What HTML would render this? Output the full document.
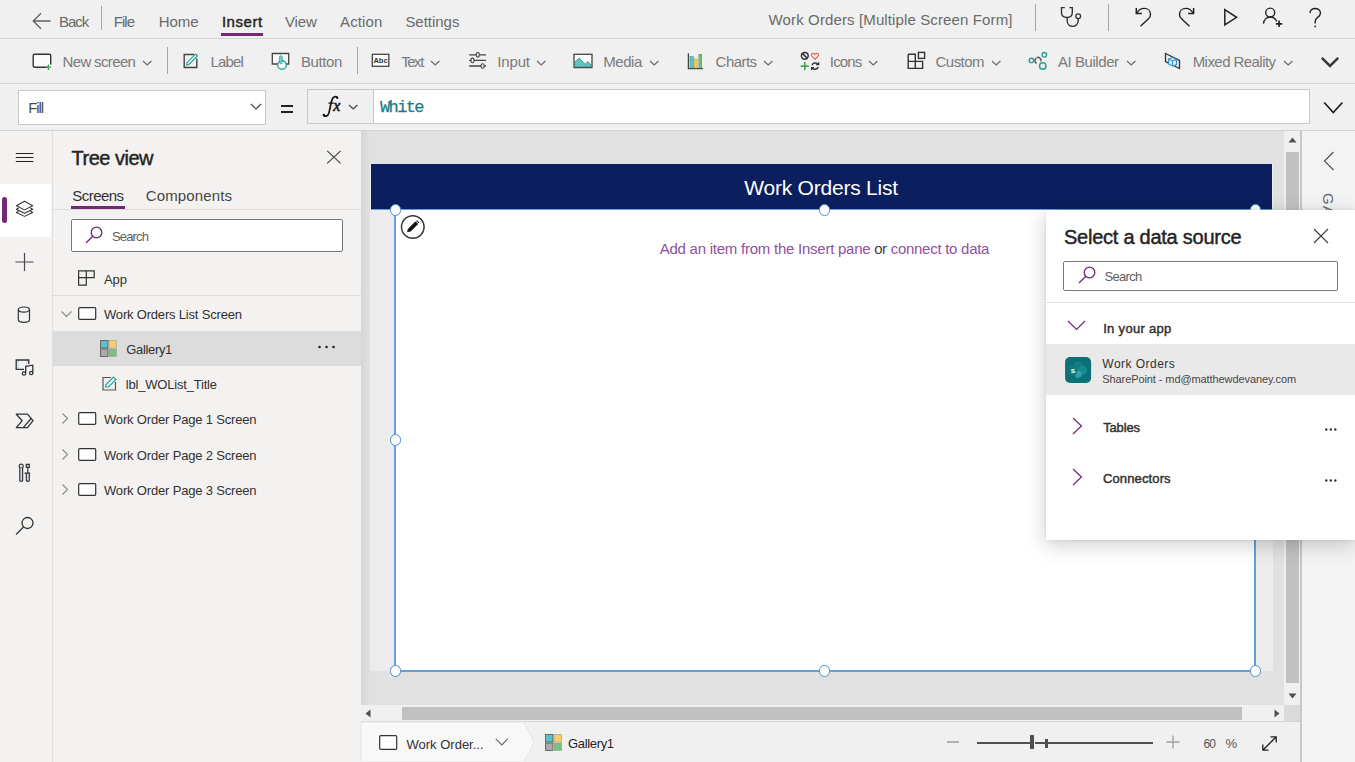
<!DOCTYPE html>
<html><head><meta charset="utf-8">
<style>
*{box-sizing:border-box;margin:0;padding:0}
html,body{width:1355px;height:762px;overflow:hidden;background:#f0f0f0;font-family:"Liberation Sans",sans-serif;color:#333;position:relative}
.a{position:absolute}
.t{position:absolute;white-space:nowrap;line-height:1}
svg{position:absolute;overflow:visible}
</style></head><body>
<div class="a" style="left:0px;top:0px;width:1355px;height:38px;background:#f0f0f0;"></div>
<div class="a" style="left:0px;top:38px;width:1355px;height:1px;background:#d4d4d4;"></div>
<div class="a" style="left:0px;top:39px;width:1355px;height:44px;background:#f0f0f0;"></div>
<div class="a" style="left:0px;top:83px;width:1355px;height:1px;background:#d4d4d4;"></div>
<div class="a" style="left:0px;top:84px;width:1355px;height:46px;background:#f0f0f0;"></div>
<div class="a" style="left:0px;top:130px;width:1355px;height:1px;background:#d4d4d4;"></div>
<div class="a" style="left:0px;top:131px;width:52px;height:631px;background:#f3f2f1;"></div>
<div class="a" style="left:52px;top:131px;width:1px;height:631px;background:#e1dfdd;"></div>
<div class="a" style="left:0px;top:184px;width:51px;height:53px;background:#ffffff;"></div>
<div class="a" style="left:2px;top:197px;width:5px;height:26px;background:#742774;border-radius:3px"></div>
<div class="a" style="left:53px;top:131px;width:308px;height:631px;background:#f3f2f1;"></div>
<div class="a" style="left:361px;top:131px;width:939px;height:574px;background:#e1e1e1;"></div>
<div class="a" style="left:361px;top:131px;width:9px;height:574px;background:linear-gradient(90deg,#d5d5d5,#e1e1e1);"></div>
<svg style="left:32px;top:12px;" width="19" height="18" viewBox="0 0 19 18"><path d="M1.2 9 H18.5 M9 1.2 L1.2 9 L9 16.8" fill="none" stroke="#5f5f5f" stroke-width="1.3"/></svg>
<div class="t" style="left:59.00px;top:14px;font-size:15px;font-family:'Liberation Sans',sans-serif;font-weight:normal;color:#6a6a6a;letter-spacing:-1.033px;">Back</div>
<div class="a" style="left:101px;top:6px;width:1px;height:24px;background:#a6a6a6;"></div>
<div class="t" style="left:113.70px;top:14px;font-size:15px;font-family:'Liberation Sans',sans-serif;font-weight:normal;color:#6a6a6a;letter-spacing:-0.942px;">File</div>
<div class="t" style="left:158.70px;top:14px;font-size:15px;font-family:'Liberation Sans',sans-serif;font-weight:normal;color:#6a6a6a;letter-spacing:-0.033px;">Home</div>
<div class="t" style="left:221.90px;top:14px;font-size:15px;font-family:'Liberation Sans',sans-serif;font-weight:normal;color:#252423;letter-spacing:0.560px;-webkit-text-stroke:0.45px #252423;">Insert</div>
<div class="a" style="left:221px;top:33px;width:42px;height:3px;background:#742774;"></div>
<div class="t" style="left:284.90px;top:14px;font-size:15px;font-family:'Liberation Sans',sans-serif;font-weight:normal;color:#6a6a6a;letter-spacing:-0.083px;">View</div>
<div class="t" style="left:340.00px;top:14px;font-size:15px;font-family:'Liberation Sans',sans-serif;font-weight:normal;color:#6a6a6a;letter-spacing:0.130px;">Action</div>
<div class="t" style="left:405.40px;top:14px;font-size:15px;font-family:'Liberation Sans',sans-serif;font-weight:normal;color:#6a6a6a;letter-spacing:-0.021px;">Settings</div>
<div class="t" style="left:768.60px;top:12px;font-size:15px;font-family:'Liberation Sans',sans-serif;font-weight:normal;color:#6a6a6a;letter-spacing:0.123px;">Work Orders [Multiple Screen Form]</div>
<div class="a" style="left:1035px;top:4px;width:1px;height:27px;background:#a6a6a6;"></div>
<div class="a" style="left:1108px;top:4px;width:1px;height:27px;background:#a6a6a6;"></div>
<svg style="left:1060px;top:7px;" width="23" height="21" viewBox="0 0 23 21"><path d="M4.8 0.6 H1.5 V5.5 C1.5 9 4 10.5 7 10.5 C10 10.5 12.3 9 12.3 5.5 V0.6 H9.4" fill="none" stroke="#333" stroke-width="1.4"/><path d="M7.2 10.5 V13.5 C7.2 17 9.5 19.4 12.7 19.4 C15.7 19.4 18.2 17 18.2 13.5 V11.8" fill="none" stroke="#333" stroke-width="1.4"/><circle cx="18.2" cy="9.2" r="2.4" fill="none" stroke="#333" stroke-width="1.3"/></svg>
<svg style="left:1135px;top:7px;" width="18" height="21" viewBox="0 0 18 21"><path d="M1.3 1.1 V6.6 H6.9" fill="none" stroke="#222" stroke-width="1.5"/><path d="M1.8 6.2 C3.5 3 6 1.4 9.4 1.4 C13 1.4 15.5 4 15.5 7.5 C15.5 9 15 10.5 13.7 11.5 L5.5 19.3" fill="none" stroke="#222" stroke-width="1.4"/></svg>
<svg style="left:1177px;top:7px;" width="18" height="21" viewBox="0 0 18 21"><path d="M16.6 1.1 V6.6 H11.1" fill="none" stroke="#222" stroke-width="1.5"/><path d="M16.1 6.2 C14.4 3 11.9 1.4 8.9 1.4 C5 1.4 2.5 4 2.5 7.5 C2.5 9 3 10.5 4.3 11.5 L12.5 19.3" fill="none" stroke="#222" stroke-width="1.4"/></svg>
<svg style="left:1223px;top:8px;" width="16" height="18" viewBox="0 0 16 18"><path d="M1.8 1.6 L13.6 9.3 L1.8 16.9 Z" fill="none" stroke="#222" stroke-width="1.5" stroke-linejoin="miter"/></svg>
<svg style="left:1262px;top:7px;" width="21" height="21" viewBox="0 0 21 21"><circle cx="8.2" cy="5.6" r="4.5" fill="none" stroke="#222" stroke-width="1.4"/><path d="M1.4 16.6 C2 12.5 5 10 8.2 10 C11 10 13.5 11.8 14.8 14.5" fill="none" stroke="#222" stroke-width="1.4"/><path d="M17.1 13.6 V20 M13.9 16.9 H20.3" stroke="#222" stroke-width="1.6"/></svg>
<svg style="left:1308px;top:7px;" width="14" height="22" viewBox="0 0 14 22"><path d="M2 6 C2 3 4.5 1.5 7.2 1.5 C10 1.5 12.5 3.5 12.5 6 C12.5 8.5 10.5 9.8 9 11 C7.8 12 7.2 13 7.2 14.5 V16.5" fill="none" stroke="#222" stroke-width="1.4"/><circle cx="7.2" cy="19.4" r="0.9" fill="#222"/></svg>
<svg style="left:32px;top:53px;" width="21" height="17" viewBox="0 0 21 17"><path d="M16.5 14.2 H2.6 C1.8 14.2 1.2 13.6 1.2 12.8 V2.7 C1.2 1.9 1.8 1.3 2.6 1.3 H17.3 C18.1 1.3 18.7 1.9 18.7 2.7 V11.5" fill="#fafafa" stroke="#333" stroke-width="1.4"/><path d="M16.4 11.5 V16.9 M13.7 14.2 H19.1" stroke="#4a9e55" stroke-width="1.3"/></svg>
<div class="t" style="left:62.50px;top:54px;font-size:15px;font-family:'Liberation Sans',sans-serif;font-weight:normal;color:#7a7a7a;letter-spacing:-0.639px;">New screen</div>
<svg style="left:142px;top:60px;" width="11" height="7" viewBox="0 0 11 7"><path d="M1 1 L5.2 5 L9.4 1" fill="none" stroke="#666" stroke-width="1.1"/></svg>
<div class="a" style="left:167px;top:47px;width:1px;height:27px;background:#a6a6a6;"></div>
<svg style="left:183px;top:53px;" width="16" height="16" viewBox="0 0 16 16"><path d="M11 1.5 H1.2 V14.5 H13.8 V5.5" fill="none" stroke="#444" stroke-width="1.4"/><path d="M3.6 11.9 L4.1 9.7 L12.6 1.2 L14.4 3 L5.9 11.5 Z" fill="#e6f7f5" stroke="#2aa198" stroke-width="1.2"/></svg>
<div class="t" style="left:210.40px;top:54px;font-size:15px;font-family:'Liberation Sans',sans-serif;font-weight:normal;color:#7a7a7a;letter-spacing:-0.788px;">Label</div>
<svg style="left:271px;top:52px;" width="19" height="19" viewBox="0 0 19 19"><path d="M7 12 H1.3 V1.5 H17.7 V12 H15" fill="#fafafa" stroke="#444" stroke-width="1.3"/><circle cx="11" cy="13" r="4.3" fill="#fff" stroke="#2aa198" stroke-width="1.4"/><rect x="8.6" y="3.8" width="2.6" height="8" rx="1.2" fill="#7fcfc8" stroke="#2aa198" stroke-width="0.8"/></svg>
<div class="t" style="left:301.00px;top:54px;font-size:15px;font-family:'Liberation Sans',sans-serif;font-weight:normal;color:#7a7a7a;letter-spacing:-0.395px;">Button</div>
<div class="a" style="left:357px;top:47px;width:1px;height:27px;background:#a6a6a6;"></div>
<svg style="left:371px;top:53px;" width="19" height="15" viewBox="0 0 19 15"><rect x="1.3" y="1.3" width="16.5" height="12" fill="#fff" stroke="#444" stroke-width="1.3"/><text x="9.5" y="10.2" font-family="Liberation Sans" font-size="7.5" font-weight="bold" text-anchor="middle" fill="#333">Abc</text></svg>
<div class="t" style="left:401.20px;top:54px;font-size:15px;font-family:'Liberation Sans',sans-serif;font-weight:normal;color:#7a7a7a;letter-spacing:-1.467px;">Text</div>
<svg style="left:430px;top:60px;" width="11" height="7" viewBox="0 0 11 7"><path d="M1 1 L5.2 5 L9.4 1" fill="none" stroke="#666" stroke-width="1.1"/></svg>
<svg style="left:468px;top:51px;" width="19" height="19" viewBox="0 0 19 19"><path d="M1.2 3.8 H18 M1.2 9.4 H18 M1.2 15 H18" stroke="#444" stroke-width="1.3"/><rect x="8.3" y="1.5" width="3" height="4.6" rx="1.5" fill="#f0f0f0" stroke="#444" stroke-width="1.1"/><rect x="3" y="7.1" width="3" height="4.6" rx="1.5" fill="#f0f0f0" stroke="#444" stroke-width="1.1"/><rect x="13.1" y="12.7" width="3" height="4.6" rx="1.5" fill="#f0f0f0" stroke="#444" stroke-width="1.1"/></svg>
<div class="t" style="left:497.30px;top:54px;font-size:15px;font-family:'Liberation Sans',sans-serif;font-weight:normal;color:#7a7a7a;letter-spacing:-0.169px;">Input</div>
<svg style="left:536px;top:60px;" width="11" height="7" viewBox="0 0 11 7"><path d="M1 1 L5.2 5 L9.4 1" fill="none" stroke="#666" stroke-width="1.1"/></svg>
<svg style="left:573px;top:53px;" width="20" height="16" viewBox="0 0 20 16"><rect x="1" y="1.3" width="18" height="13.3" fill="#fff" stroke="#444" stroke-width="1.3"/><path d="M1.6 14 V9 L6.3 5 L12.4 11.3 L14.6 8.5 L18.4 12 V14 Z" fill="#5ec4c0" stroke="#3a6f70" stroke-width="0.6"/></svg>
<div class="t" style="left:603.20px;top:54px;font-size:15px;font-family:'Liberation Sans',sans-serif;font-weight:normal;color:#7a7a7a;letter-spacing:-0.444px;">Media</div>
<svg style="left:649px;top:60px;" width="11" height="7" viewBox="0 0 11 7"><path d="M1 1 L5.2 5 L9.4 1" fill="none" stroke="#666" stroke-width="1.1"/></svg>
<svg style="left:687px;top:52px;" width="18" height="18" viewBox="0 0 18 18"><path d="M1.4 1.2 V16.7 H15.8" fill="none" stroke="#444" stroke-width="1.3"/><rect x="3" y="4.5" width="3.4" height="11.5" fill="#5ec4c0" stroke="#4a8a8a" stroke-width="0.5"/><rect x="7" y="7" width="3.2" height="9" fill="#f7c86a" stroke="#b09050" stroke-width="0.5"/><rect x="11.9" y="2.3" width="2.8" height="13.7" fill="#74bf7a" stroke="#4a8a55" stroke-width="0.5"/></svg>
<div class="t" style="left:715.60px;top:54px;font-size:15px;font-family:'Liberation Sans',sans-serif;font-weight:normal;color:#7a7a7a;letter-spacing:-0.545px;">Charts</div>
<svg style="left:763px;top:60px;" width="11" height="7" viewBox="0 0 11 7"><path d="M1 1 L5.2 5 L9.4 1" fill="none" stroke="#666" stroke-width="1.1"/></svg>
<svg style="left:800px;top:51px;" width="21" height="20" viewBox="0 0 21 20"><circle cx="4.8" cy="4.8" r="3.4" fill="none" stroke="#333" stroke-width="1.5"/><path d="M2.4 2.4 L7.2 7.2" stroke="#333" stroke-width="1.5"/><path d="M15 8.3 L11.9 5.2 C10.9 4.2 11.5 2.3 13 2.3 C14 2.3 14.6 2.9 15 3.5 C15.4 2.9 16 2.3 17 2.3 C18.5 2.3 19.1 4.2 18.1 5.2 Z" fill="none" stroke="#e8684a" stroke-width="1.2"/><path d="M4.8 11 V19.2 M0.7 15.1 H8.9" stroke="#4aa55a" stroke-width="1.6"/><path d="M12 14.2 C12.5 11.8 16.5 11.2 18.1 13.3 M18.2 16 C17.7 18.5 13.7 19.1 12.1 17" fill="none" stroke="#333" stroke-width="1.4"/><path d="M16.2 13.6 H18.6 V11.2 M14 16.6 H11.6 V19" fill="none" stroke="#333" stroke-width="1.3"/></svg>
<div class="t" style="left:829.80px;top:54px;font-size:15px;font-family:'Liberation Sans',sans-serif;font-weight:normal;color:#7a7a7a;letter-spacing:-0.819px;">Icons</div>
<svg style="left:868px;top:60px;" width="11" height="7" viewBox="0 0 11 7"><path d="M1 1 L5.2 5 L9.4 1" fill="none" stroke="#666" stroke-width="1.1"/></svg>
<svg style="left:907px;top:51px;" width="19" height="19" viewBox="0 0 19 19"><path d="M1.2 3.3 H8.3 V17.4 M1.2 10.4 H15.6 V17.4 H1.2 Z M1.2 3.3 V17.4" fill="none" stroke="#333" stroke-width="1.4"/><rect x="11.4" y="1.4" width="6.2" height="6" fill="none" stroke="#333" stroke-width="1.4"/></svg>
<div class="t" style="left:935.60px;top:54px;font-size:15px;font-family:'Liberation Sans',sans-serif;font-weight:normal;color:#7a7a7a;letter-spacing:-0.565px;">Custom</div>
<svg style="left:991px;top:60px;" width="11" height="7" viewBox="0 0 11 7"><path d="M1 1 L5.2 5 L9.4 1" fill="none" stroke="#666" stroke-width="1.1"/></svg>
<svg style="left:1028px;top:51px;" width="20" height="19" viewBox="0 0 20 19"><path d="M9 6.5 C11 5.8 13.5 7.5 13 10.5" fill="none" stroke="#555" stroke-width="1.4"/><path d="M8.5 6.8 C6.5 8 6.3 11 8.5 12.5" fill="none" stroke="#555" stroke-width="1.4"/><circle cx="3.4" cy="9.4" r="2.2" fill="none" stroke="#2aa198" stroke-width="1.4"/><circle cx="16.3" cy="3.8" r="2.3" fill="none" stroke="#2aa198" stroke-width="1.4"/><circle cx="14.7" cy="15" r="3.2" fill="none" stroke="#2aa198" stroke-width="1.5"/></svg>
<div class="t" style="left:1058.00px;top:54px;font-size:15px;font-family:'Liberation Sans',sans-serif;font-weight:normal;color:#7a7a7a;letter-spacing:-0.444px;">AI Builder</div>
<svg style="left:1126px;top:60px;" width="11" height="7" viewBox="0 0 11 7"><path d="M1 1 L5.2 5 L9.4 1" fill="none" stroke="#666" stroke-width="1.1"/></svg>
<svg style="left:1163px;top:52px;" width="18" height="18" viewBox="0 0 18 18"><path d="M2.5 1.5 L16.5 8.5 V16.5 L2.5 9.5 Z" fill="none" stroke="#333" stroke-width="1.3"/><path d="M5.5 7 L9.5 5.5 L13.5 7.5 V12.5 L9.5 14 L5.5 12 Z M5.5 7 L9.5 9 L13.5 7.5 M9.5 9 V14" fill="#d5ecf7" stroke="#3a8fc8" stroke-width="1.1"/></svg>
<div class="t" style="left:1192.70px;top:54px;font-size:15px;font-family:'Liberation Sans',sans-serif;font-weight:normal;color:#7a7a7a;letter-spacing:-0.558px;">Mixed Reality</div>
<svg style="left:1283px;top:60px;" width="11" height="7" viewBox="0 0 11 7"><path d="M1 1 L5.2 5 L9.4 1" fill="none" stroke="#666" stroke-width="1.1"/></svg>
<svg style="left:1320px;top:56px;" width="20" height="12" viewBox="0 0 20 12"><path d="M1.8 1.8 L10 10 L18.2 1.8" fill="none" stroke="#3a3a3a" stroke-width="2.5"/></svg>
<div class="a" style="left:18px;top:90px;width:248px;height:35px;background:#ffffff;border:1px solid #c8c8c8"></div>
<div class="t" style="left:28.30px;top:100px;font-size:15px;font-family:'Liberation Sans',sans-serif;font-weight:normal;color:#4a4a4a;letter-spacing:-1.142px;">Fill</div>
<svg style="left:250px;top:103px;" width="12" height="8" viewBox="0 0 12 8"><path d="M1 1 L6 6 L11 1" fill="none" stroke="#444" stroke-width="1.2"/></svg>
<div class="a" style="left:281px;top:105px;width:12px;height:2px;background:#222;"></div>
<div class="a" style="left:281px;top:111px;width:12px;height:2px;background:#222;"></div>
<div class="a" style="left:307px;top:89px;width:67px;height:35px;background:#f0f0f0;border:1px solid #c8c8c8"></div>
<svg style="left:320px;top:94px;" width="26" height="26" viewBox="0 0 26 26"><path d="M3.6 20.6 C4.6 23.2 7.6 22.6 8.8 19.2 C9.6 16.5 10.4 12 11.3 8 C12.2 4 13.6 2.5 15.6 2.6 C16.6 2.7 17.3 3.2 17.5 4" fill="none" stroke="#111" stroke-width="1.7" stroke-linecap="round"/><path d="M8.4 9.1 H13.8" stroke="#111" stroke-width="1.2"/><circle cx="4" cy="21.3" r="1.2" fill="#111"/><circle cx="17.2" cy="3.8" r="1.1" fill="#111"/><text x="13.2" y="16.6" font-family="Liberation Serif" font-style="italic" font-size="16" fill="#111" stroke="#111" stroke-width="0.5">x</text></svg>
<svg style="left:348px;top:104px;" width="11" height="7" viewBox="0 0 11 7"><path d="M1 1 L5.2 5 L9.4 1" fill="none" stroke="#444" stroke-width="1.2"/></svg>
<div class="a" style="left:373px;top:89px;width:937px;height:35px;background:#ffffff;border:1px solid #c8c8c8"></div>
<div class="t" style="left:380.00px;top:99px;font-size:17px;font-family:'Liberation Mono',monospace;font-weight:normal;color:#1f7a85;letter-spacing:-1.625px;-webkit-text-stroke:0.25px #1f7a85;">White</div>
<svg style="left:1323px;top:101px;" width="21" height="14" viewBox="0 0 21 14"><path d="M1.2 1.5 L10.3 11.6 L19.4 1.5" fill="none" stroke="#1a1a1a" stroke-width="1.6"/></svg>
<svg style="left:15px;top:152px;" width="19" height="11" viewBox="0 0 19 11"><path d="M0.8 1.5 H18.4 M0.8 5.5 H18.4 M0.8 9.5 H18.4" stroke="#222" stroke-width="1"/></svg>
<svg style="left:15px;top:200px;" width="19" height="19" viewBox="0 0 19 19"><path d="M9.5 1.3 L17.7 5.8 L9.5 9.9 L1.4 5.8 Z" fill="none" stroke="#333" stroke-width="1.05" stroke-linejoin="round"/><path d="M3.6 8 L1.4 9.2 L9.5 13.2 L17.7 9.2 L15.4 8" fill="none" stroke="#333" stroke-width="1.05" stroke-linejoin="round"/><path d="M3.6 11.3 L1.4 12.5 L9.5 16.4 L17.7 12.5 L15.4 11.3" fill="none" stroke="#333" stroke-width="1.05" stroke-linejoin="round"/></svg>
<svg style="left:15px;top:253px;" width="19" height="19" viewBox="0 0 19 19"><path d="M9.5 0 V18 M0.5 9 H18.5" stroke="#4a4650" stroke-width="1.2"/></svg>
<svg style="left:17px;top:306px;" width="14" height="18" viewBox="0 0 14 18"><ellipse cx="6.9" cy="3.6" rx="5.6" ry="2.6" fill="none" stroke="#333" stroke-width="1.2"/><path d="M1.3 3.6 V13.8 C1.3 17.2 12.5 17.2 12.5 13.8 V3.6" fill="none" stroke="#333" stroke-width="1.2"/></svg>
<svg style="left:15px;top:358px;" width="20" height="18" viewBox="0 0 20 18"><path d="M9 11.4 H1.2 V2 H13.8 V6" fill="none" stroke="#333" stroke-width="1.3"/><path d="M3.2 3 V10.5 M11.8 3 V6" stroke="#7fb6d8" stroke-width="1" stroke-dasharray="1 1"/><path d="M10.7 15.3 V8.4 L17.8 7.2 V14.8" fill="none" stroke="#333" stroke-width="1.3"/><circle cx="9" cy="15.5" r="1.7" fill="none" stroke="#333" stroke-width="1.2"/><circle cx="16.2" cy="15" r="1.7" fill="none" stroke="#333" stroke-width="1.2"/></svg>
<svg style="left:15px;top:413px;" width="19" height="16" viewBox="0 0 19 16"><path d="M1.3 1.2 H12.5 L18 7.7 L12.5 14.7 H1.3 L7.2 7.7 Z" fill="none" stroke="#333" stroke-width="1.3" stroke-linejoin="round"/><path d="M8.3 14.7 L16.1 5.5" stroke="#333" stroke-width="1.3"/></svg>
<svg style="left:18px;top:463px;" width="13" height="20" viewBox="0 0 13 20"><circle cx="3.2" cy="3.2" r="2" fill="none" stroke="#333" stroke-width="1.2"/><path d="M1.8 5 V17.6 C1.8 18.6 4.6 18.6 4.6 17.6 V5" fill="#ddd6ee" stroke="#333" stroke-width="1.2"/><path d="M8.3 1.3 H11.3 V4.3 H8.3 Z M9.8 4.3 V10.2 M6.5 10.2 H12.2 M8.3 10.2 V17.6 C8.3 18.6 11.3 18.6 11.3 17.6 V10.2" fill="#ddd6ee" stroke="#333" stroke-width="1.2"/></svg>
<svg style="left:15px;top:516px;" width="20" height="20" viewBox="0 0 20 20"><circle cx="12.5" cy="7" r="5.5" fill="none" stroke="#333" stroke-width="1.3"/><path d="M8.5 11 L1 18.5" stroke="#333" stroke-width="1.3"/></svg>
<div class="t" style="left:71.60px;top:148px;font-size:20px;font-family:'Liberation Sans',sans-serif;font-weight:normal;color:#252423;letter-spacing:-0.512px;-webkit-text-stroke:0.45px #252423;">Tree view</div>
<svg style="left:326px;top:150px;" width="16" height="16" viewBox="0 0 16 16"><path d="M1.2 0.8 L14.6 13.4 M14.6 0.8 L1.2 13.4" stroke="#444" stroke-width="1.15"/></svg>
<div class="t" style="left:72.30px;top:188px;font-size:15px;font-family:'Liberation Sans',sans-serif;font-weight:normal;color:#323130;letter-spacing:-0.550px;">Screens</div>
<div class="t" style="left:145.80px;top:188px;font-size:15px;font-family:'Liberation Sans',sans-serif;font-weight:normal;color:#484644;letter-spacing:0.133px;">Components</div>
<div class="a" style="left:53px;top:209px;width:308px;height:1px;background:#dcdcdc;"></div>
<div class="a" style="left:71px;top:206px;width:54px;height:2.5px;background:#742774;"></div>
<div class="a" style="left:71px;top:219px;width:272px;height:33px;background:#ffffff;border:1px solid #7a7876;border-radius:2px"></div>
<svg style="left:85px;top:226px;" width="18" height="18" viewBox="0 0 18 18"><circle cx="11.5" cy="6.5" r="5.3" fill="none" stroke="#742774" stroke-width="1.3"/><path d="M7.8 10.2 L1 17" stroke="#742774" stroke-width="1.3"/></svg>
<div class="t" style="left:112.00px;top:230px;font-size:13px;font-family:'Liberation Sans',sans-serif;font-weight:normal;color:#605e5c;letter-spacing:-0.850px;">Search</div>
<svg style="left:77px;top:269px;" width="19" height="18" viewBox="0 0 19 18"><path d="M1.6 1.8 H17.2 V8.6 H9.3 V16.2 H1.6 Z M1.6 8.6 H9.3 M9.3 1.8 V8.6" fill="none" stroke="#333" stroke-width="1.2"/></svg>
<div class="t" style="left:104.00px;top:273px;font-size:13px;font-family:'Liberation Sans',sans-serif;font-weight:normal;color:#323130;letter-spacing:-0.062px;">App</div>
<div class="a" style="left:53px;top:295px;width:308px;height:1px;background:#dcdcdc;"></div>
<svg style="left:61px;top:311px;" width="12" height="7" viewBox="0 0 12 7"><path d="M0.5 0.5 L5.5 5.5 L10.5 0.5" fill="none" stroke="#8a8886" stroke-width="1.1"/></svg>
<svg style="left:78px;top:307px;" width="19" height="14" viewBox="0 0 19 14"><rect x="0.7" y="0.7" width="17" height="11.6" rx="1" fill="#fff" stroke="#333" stroke-width="1.2"/></svg>
<div class="t" style="left:104.00px;top:308px;font-size:13px;font-family:'Liberation Sans',sans-serif;font-weight:normal;color:#323130;letter-spacing:-0.188px;">Work Orders List Screen</div>
<div class="a" style="left:53px;top:331px;width:308px;height:35px;background:#dcdcdc;"></div>
<svg style="left:100px;top:340px;" width="17" height="17" viewBox="0 0 17 17"><rect x="0.5" y="0.5" width="7.5" height="7.5" fill="#5bc0c8" stroke="#555" stroke-width="0.8"/><rect x="9" y="0.5" width="7.5" height="7.5" fill="#f9cd6a" stroke="#999" stroke-width="0.6"/><rect x="0.5" y="9" width="7.5" height="7.5" fill="#aaa" stroke="#555" stroke-width="0.8"/><rect x="9" y="9" width="7.5" height="7.5" fill="#78c27d" stroke="#999" stroke-width="0.6"/></svg>
<div class="t" style="left:126.30px;top:343px;font-size:13px;font-family:'Liberation Sans',sans-serif;font-weight:normal;color:#323130;letter-spacing:-0.339px;">Gallery1</div>
<svg style="left:318px;top:345px;" width="17" height="4" viewBox="0 0 17 4"><circle cx="1.5" cy="2" r="1.3" fill="#222"/><circle cx="8.5" cy="2" r="1.3" fill="#222"/><circle cx="15.5" cy="2" r="1.3" fill="#222"/></svg>
<svg style="left:102px;top:376px;" width="15" height="15" viewBox="0 0 15 15"><path d="M9 1.5 H1 V14 H13.5 V6" fill="none" stroke="#555" stroke-width="1.2"/><path d="M3.5 11 L4 8.5 L11.5 1 L14 3.5 L6.5 11 Z" fill="#e0f5f3" stroke="#2aa198" stroke-width="1.2"/></svg>
<div class="t" style="left:125.80px;top:378px;font-size:13px;font-family:'Liberation Sans',sans-serif;font-weight:normal;color:#323130;letter-spacing:-0.195px;">lbl_WOList_Title</div>
<svg style="left:62px;top:413px;" width="7" height="12" viewBox="0 0 7 12"><path d="M0.5 0.5 L5.5 5.5 L0.5 10.5" fill="none" stroke="#8a8886" stroke-width="1.1"/></svg>
<svg style="left:78px;top:412px;" width="19" height="14" viewBox="0 0 19 14"><rect x="0.7" y="0.7" width="17" height="11.6" rx="1" fill="#fff" stroke="#333" stroke-width="1.2"/></svg>
<div class="t" style="left:104.00px;top:413px;font-size:13px;font-family:'Liberation Sans',sans-serif;font-weight:normal;color:#323130;letter-spacing:-0.174px;">Work Order Page 1 Screen</div>
<svg style="left:62px;top:449px;" width="7" height="12" viewBox="0 0 7 12"><path d="M0.5 0.5 L5.5 5.5 L0.5 10.5" fill="none" stroke="#8a8886" stroke-width="1.1"/></svg>
<svg style="left:78px;top:448px;" width="19" height="14" viewBox="0 0 19 14"><rect x="0.7" y="0.7" width="17" height="11.6" rx="1" fill="#fff" stroke="#333" stroke-width="1.2"/></svg>
<div class="t" style="left:104.00px;top:449px;font-size:13px;font-family:'Liberation Sans',sans-serif;font-weight:normal;color:#323130;letter-spacing:-0.174px;">Work Order Page 2 Screen</div>
<svg style="left:62px;top:484px;" width="7" height="12" viewBox="0 0 7 12"><path d="M0.5 0.5 L5.5 5.5 L0.5 10.5" fill="none" stroke="#8a8886" stroke-width="1.1"/></svg>
<svg style="left:78px;top:483px;" width="19" height="14" viewBox="0 0 19 14"><rect x="0.7" y="0.7" width="17" height="11.6" rx="1" fill="#fff" stroke="#333" stroke-width="1.2"/></svg>
<div class="t" style="left:104.00px;top:484px;font-size:13px;font-family:'Liberation Sans',sans-serif;font-weight:normal;color:#323130;letter-spacing:-0.174px;">Work Order Page 3 Screen</div>
<div class="a" style="left:370px;top:164px;width:903px;height:507px;background:#ececec;"></div>
<div class="a" style="left:371px;top:164px;width:901px;height:46px;background:#0b1f5f;"></div>
<div class="a" style="left:395px;top:210px;width:860px;height:461px;background:#ffffff;"></div>
<div class="t" style="left:744.30px;top:177px;font-size:21px;font-family:'Liberation Sans',sans-serif;font-weight:normal;color:#ffffff;letter-spacing:-0.228px;">Work Orders List</div>
<div class="t" style="left:659.70px;top:241px;font-size:15px;font-family:'Liberation Sans',sans-serif;font-weight:normal;color:#90509e;letter-spacing:-0.242px;">Add an item from the Insert pane</div>
<div class="t" style="left:874.30px;top:241px;font-size:15px;font-family:'Liberation Sans',sans-serif;font-weight:normal;color:#444;letter-spacing:-0.675px;">or</div>
<div class="t" style="left:890.70px;top:241px;font-size:15px;font-family:'Liberation Sans',sans-serif;font-weight:normal;color:#90509e;letter-spacing:-0.273px;">connect to data</div>
<div class="a" style="left:371px;top:208.8px;width:901px;height:1.6px;background:#62a0d8;"></div>
<div class="a" style="left:394.4px;top:210px;width:1.7px;height:461px;background:#62a0d8;"></div>
<div class="a" style="left:1254.2px;top:210px;width:1.7px;height:461px;background:#62a0d8;"></div>
<div class="a" style="left:395px;top:670.2px;width:860px;height:1.7px;background:#62a0d8;"></div>
<div class="a" style="left:389.79999999999995px;top:204.4px;width:11.2px;height:11.2px;border-radius:50%;background:#fff;border:1.7px solid #4f8fcf"></div>
<div class="a" style="left:818.9px;top:204.4px;width:11.2px;height:11.2px;border-radius:50%;background:#fff;border:1.7px solid #4f8fcf"></div>
<div class="a" style="left:1249.6000000000001px;top:204.4px;width:11.2px;height:11.2px;border-radius:50%;background:#fff;border:1.7px solid #4f8fcf"></div>
<div class="a" style="left:389.79999999999995px;top:434.4px;width:11.2px;height:11.2px;border-radius:50%;background:#fff;border:1.7px solid #4f8fcf"></div>
<div class="a" style="left:1249.6000000000001px;top:434.4px;width:11.2px;height:11.2px;border-radius:50%;background:#fff;border:1.7px solid #4f8fcf"></div>
<div class="a" style="left:389.79999999999995px;top:665.4px;width:11.2px;height:11.2px;border-radius:50%;background:#fff;border:1.7px solid #4f8fcf"></div>
<div class="a" style="left:818.9px;top:665.4px;width:11.2px;height:11.2px;border-radius:50%;background:#fff;border:1.7px solid #4f8fcf"></div>
<div class="a" style="left:1249.6000000000001px;top:665.4px;width:11.2px;height:11.2px;border-radius:50%;background:#fff;border:1.7px solid #4f8fcf"></div>
<svg style="left:400px;top:214px;" width="26" height="26" viewBox="0 0 26 26"><circle cx="12.8" cy="13" r="11.3" fill="#fff" stroke="#333" stroke-width="1.4"/><path d="M7.5 17.5 L8.3 15 L15.5 7.8 L17.7 10 L10.5 17.2 Z" fill="#111" stroke="#111" stroke-width="0.8"/><path d="M16.2 7 L17 6.3 L19.2 8.5 L18.5 9.3 Z" fill="#111"/></svg>
<div class="a" style="left:1284px;top:131px;width:16px;height:574px;background:#f0f0f0;"></div>
<div class="a" style="left:1286px;top:152px;width:13px;height:531px;background:#c1c1c1;"></div>
<svg style="left:1288px;top:137px;" width="9" height="6" viewBox="0 0 9 6"><path d="M0.5 5.5 L4.5 0.5 L8.5 5.5 Z" fill="#505050"/></svg>
<svg style="left:1288px;top:693px;" width="9" height="6" viewBox="0 0 9 6"><path d="M0.5 0.5 L4.5 5.5 L8.5 0.5 Z" fill="#505050"/></svg>
<div class="a" style="left:361px;top:705px;width:923px;height:16px;background:#f0f0f0;"></div>
<div class="a" style="left:402px;top:707px;width:840px;height:13px;background:#c1c1c1;"></div>
<svg style="left:365px;top:709px;" width="6" height="9" viewBox="0 0 6 9"><path d="M5.5 0.5 L0.5 4.5 L5.5 8.5 Z" fill="#505050"/></svg>
<svg style="left:1274px;top:709px;" width="6" height="9" viewBox="0 0 6 9"><path d="M0.5 0.5 L5.5 4.5 L0.5 8.5 Z" fill="#505050"/></svg>
<div class="a" style="left:1284px;top:705px;width:16px;height:16px;background:#dadada;"></div>
<div class="a" style="left:1300px;top:131px;width:2px;height:631px;background:#c8c8c8;"></div>
<div class="a" style="left:1302px;top:131px;width:53px;height:631px;background:#f3f3f3;"></div>
<svg style="left:1323px;top:151px;" width="12" height="20" viewBox="0 0 12 20"><path d="M10.5 1 L1.5 10 L10.5 19" fill="none" stroke="#555" stroke-width="1.2"/></svg>
<div class="t" style="left:1336px;top:193px;transform-origin:0 0;transform:rotate(90deg);font-size:15px;color:#6b6b6b;letter-spacing:1px">GALLERY</div>
<div class="a" style="left:361px;top:721px;width:939px;height:41px;background:#f0f0f0;"></div>
<div class="a" style="left:361px;top:721px;width:939px;height:1px;background:#d4d4d4;"></div>
<svg style="left:361px;top:722px" width="180" height="40" viewBox="0 0 180 40"><path d="M0 0 H163 L173 20 L163 40 H0 Z" fill="#f8f8f8" stroke="#e4e4e4" stroke-width="1"/></svg>
<svg style="left:379px;top:735px;" width="19" height="16" viewBox="0 0 19 16"><rect x="0.7" y="0.7" width="17" height="13.6" rx="1" fill="#fff" stroke="#333" stroke-width="1.2"/></svg>
<div class="t" style="left:406.50px;top:738px;font-size:13px;font-family:'Liberation Sans',sans-serif;font-weight:normal;color:#323130;letter-spacing:0.000px;">Work Order...</div>
<svg style="left:495px;top:738px;" width="14" height="9" viewBox="0 0 14 9"><path d="M0.8 0.8 L6.8 7 L12.8 0.8" fill="none" stroke="#666" stroke-width="1.1"/></svg>
<svg style="left:545px;top:734px;" width="17" height="17" viewBox="0 0 17 17"><rect x="0.5" y="0.5" width="7.5" height="7.5" fill="#5bc0c8" stroke="#555" stroke-width="0.8"/><rect x="9" y="0.5" width="7.5" height="7.5" fill="#f9cd6a" stroke="#999" stroke-width="0.6"/><rect x="0.5" y="9" width="7.5" height="7.5" fill="#aaa" stroke="#555" stroke-width="0.8"/><rect x="9" y="9" width="7.5" height="7.5" fill="#78c27d" stroke="#999" stroke-width="0.6"/></svg>
<div class="t" style="left:568.00px;top:737px;font-size:13px;font-family:'Liberation Sans',sans-serif;font-weight:normal;color:#252423;letter-spacing:-0.339px;">Gallery1</div>
<div class="a" style="left:947px;top:741px;width:12px;height:2px;background:#b0b0b0;"></div>
<div class="a" style="left:977px;top:742px;width:176px;height:2px;background:#505050;"></div>
<div class="a" style="left:1030px;top:735px;width:4px;height:14px;background:#505050;"></div>
<div class="a" style="left:1034px;top:741px;width:1px;height:4px;background:#f0f0f0;"></div>
<div class="a" style="left:1045px;top:739px;width:3px;height:9px;background:#505050;"></div>
<svg style="left:1166px;top:735px;" width="14" height="14" viewBox="0 0 14 14"><path d="M7 0.5 V13.5 M0.5 7 H13.5" stroke="#a0a0a0" stroke-width="1.4"/></svg>
<div class="t" style="left:1203.50px;top:738px;font-size:12px;font-family:'Liberation Sans',sans-serif;font-weight:normal;color:#555;letter-spacing:-0.875px;">60</div>
<div class="t" style="left:1225.60px;top:737px;font-size:13px;font-family:'Liberation Sans',sans-serif;font-weight:normal;color:#555;letter-spacing:0.000px;">%</div>
<svg style="left:1261px;top:735px;" width="17" height="17" viewBox="0 0 17 17"><path d="M2 15 L15 2 M9.5 1.8 H15.2 V7.5 M1.8 9.5 V15.2 H7.5" fill="none" stroke="#222" stroke-width="1.3"/></svg>
<div class="a" style="left:1046px;top:210px;width:309px;height:330px;background:#fff;box-shadow:0 5px 20px rgba(0,0,0,0.20),0 0 3px rgba(0,0,0,0.10)"></div>
<div class="t" style="left:1064.00px;top:227px;font-size:20px;font-family:'Liberation Sans',sans-serif;font-weight:normal;color:#252423;letter-spacing:-0.251px;-webkit-text-stroke:0.45px #252423;">Select a data source</div>
<svg style="left:1313px;top:228px;" width="16" height="16" viewBox="0 0 16 16"><path d="M1 1 L15 15 M15 1 L1 15" stroke="#444" stroke-width="1.2"/></svg>
<div class="a" style="left:1063px;top:261px;width:275px;height:30px;background:#ffffff;border:1px solid #7a7876;border-radius:2px"></div>
<svg style="left:1078px;top:266px;" width="18" height="18" viewBox="0 0 18 18"><circle cx="11.5" cy="6.5" r="5.3" fill="none" stroke="#742774" stroke-width="1.3"/><path d="M7.8 10.2 L1 17" stroke="#742774" stroke-width="1.3"/></svg>
<div class="t" style="left:1104.40px;top:270px;font-size:13px;font-family:'Liberation Sans',sans-serif;font-weight:normal;color:#605e5c;letter-spacing:-0.670px;">Search</div>
<div class="a" style="left:1046px;top:302px;width:309px;height:1px;background:#e1dfdd;"></div>
<svg style="left:1067px;top:320px;" width="19" height="11" viewBox="0 0 19 11"><path d="M1 1 L9.5 9.5 L18 1" fill="none" stroke="#742774" stroke-width="1.2"/></svg>
<div class="t" style="left:1103.20px;top:322px;font-size:13px;font-family:'Liberation Sans',sans-serif;font-weight:normal;color:#323130;letter-spacing:0.310px;-webkit-text-stroke:0.45px #323130;">In your app</div>
<div class="a" style="left:1046px;top:344px;width:309px;height:51px;background:#e9e9e9;"></div>
<svg style="left:1064px;top:357px;" width="28" height="26" viewBox="0 0 28 26"><rect x="1.1" y="0" width="26" height="26" rx="5" fill="#0d7074"/><circle cx="13.7" cy="8.6" r="4.3" fill="#137f83"/><circle cx="18.5" cy="13.2" r="4.6" fill="#168a8e"/><circle cx="14.2" cy="17.3" r="3.6" fill="#25a5a9"/><rect x="5.3" y="8.2" width="7.2" height="10" rx="1" fill="#0f7a7e"/><text x="9" y="16" font-family="Liberation Sans" font-size="8" font-weight="bold" fill="#e8ffff" text-anchor="middle">s</text></svg>
<div class="t" style="left:1102.30px;top:358px;font-size:12px;font-family:'Liberation Sans',sans-serif;font-weight:normal;color:#323130;letter-spacing:0.475px;">Work Orders</div>
<div class="t" style="left:1102.30px;top:374px;font-size:11px;font-family:'Liberation Sans',sans-serif;font-weight:normal;color:#484644;letter-spacing:-0.090px;">SharePoint - md@matthewdevaney.com</div>
<svg style="left:1072px;top:417px;" width="11" height="18" viewBox="0 0 11 18"><path d="M1 1 L9.5 9 L1 17" fill="none" stroke="#742774" stroke-width="1.2"/></svg>
<div class="t" style="left:1103.20px;top:421px;font-size:13px;font-family:'Liberation Sans',sans-serif;font-weight:normal;color:#323130;letter-spacing:-0.165px;-webkit-text-stroke:0.45px #323130;">Tables</div>
<svg style="left:1325px;top:428px;" width="12" height="3" viewBox="0 0 12 3"><circle cx="1.3" cy="1.5" r="1.2" fill="#3b2a4a"/><circle cx="5.8" cy="1.5" r="1.2" fill="#3b2a4a"/><circle cx="10.3" cy="1.5" r="1.2" fill="#3b2a4a"/></svg>
<svg style="left:1072px;top:468px;" width="11" height="18" viewBox="0 0 11 18"><path d="M1 1 L9.5 9 L1 17" fill="none" stroke="#742774" stroke-width="1.2"/></svg>
<div class="t" style="left:1103.00px;top:472px;font-size:13px;font-family:'Liberation Sans',sans-serif;font-weight:normal;color:#323130;letter-spacing:0.122px;-webkit-text-stroke:0.45px #323130;">Connectors</div>
<svg style="left:1325px;top:479px;" width="12" height="3" viewBox="0 0 12 3"><circle cx="1.3" cy="1.5" r="1.2" fill="#3b2a4a"/><circle cx="5.8" cy="1.5" r="1.2" fill="#3b2a4a"/><circle cx="10.3" cy="1.5" r="1.2" fill="#3b2a4a"/></svg>
</body></html>
